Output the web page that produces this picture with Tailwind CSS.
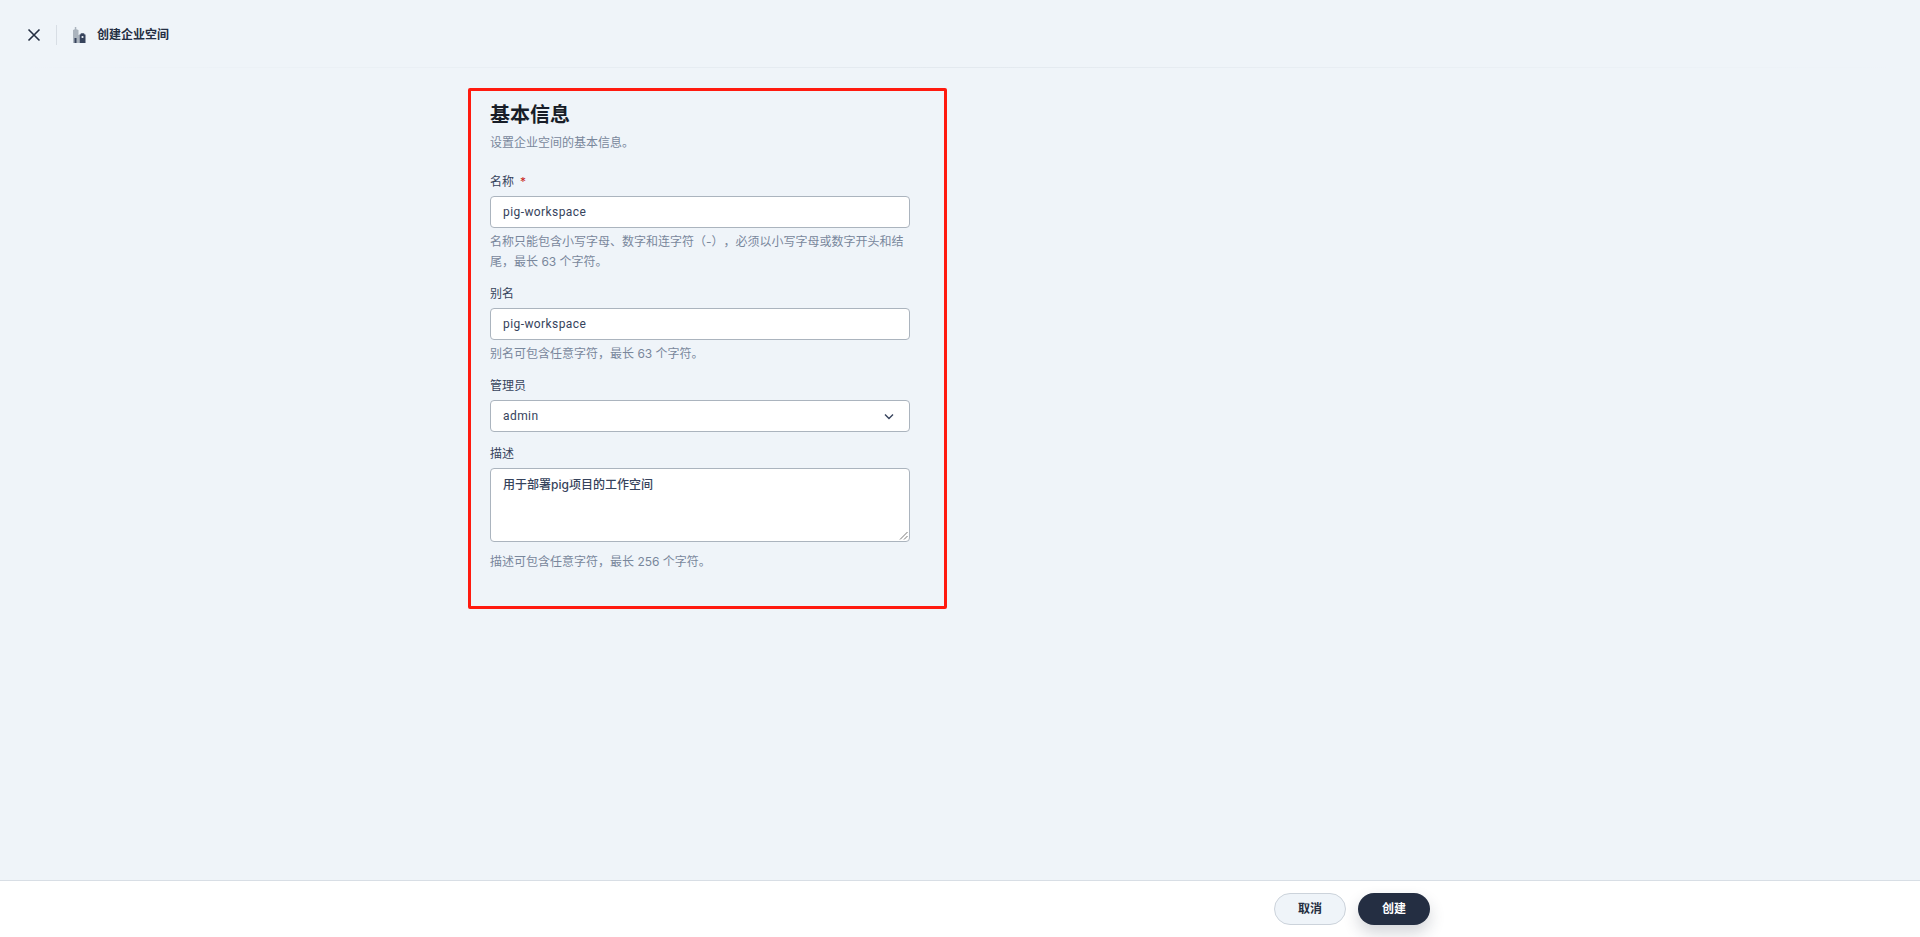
<!doctype html>
<html><head><meta charset="utf-8"><script src="https://cdn.jsdelivr.net/npm/@tailwindcss/browser@4"></script></head>
<body class="m-0 h-[937px] overflow-hidden bg-[#eff4f9] font-['Inter','Noto_Sans_CJK_SC',sans-serif] text-[12px] text-[#36435c] antialiased [text-spacing-trim:space-all]">
<div class="flex h-[937px] flex-col">
<header class="flex h-[67px] shrink-0 items-center pl-6">
<button class="mt-[2px] flex h-5 w-5 items-center justify-center text-[#242e42]"><svg width="16" height="16" viewBox="0 0 16 16" fill="none" stroke="currentColor" stroke-width="1.6"><path d="M2.500 2.500l11 11M13.500 2.500l-11 11"/></svg></button>
<div class="ml-3 mt-[2px] h-5 w-px bg-[#d8dee5]"></div>
<svg class="ml-[15px] mt-[3px]" width="15" height="18" viewBox="0 0 15 18"><path d="M1 17V4l1.800-.8V1h1.500v2.200L6.500 4v5H7v8z" fill="#abb4be"/><path d="M2.500 12h2v5h-2z" fill="#36435c"/><path d="M7.500 17V8.500h1V8.200a1 1 0 0 1 1-1h2a1 1 0 0 1 1 1v.3h1V17z" fill="#36435c"/><circle cx="10.500" cy="11" r="1.100" fill="#eff4f9"/></svg>
<span class="ml-[10px] mt-[3px] font-semibold text-[#242e42]">创建企业空间</span>
</header>
<div class="h-px shrink-0 bg-linear-to-r from-transparent via-[#e3e9ef] to-transparent"></div>
<main class="flex-1">
<div class="ml-[468px] mt-5 h-[521px] w-[479px] rounded-[2px] border-[3px] border-[#ff1a0f] pl-[19px] pt-[10px]">
<h2 class="text-[20px] leading-[28px] font-bold text-[#181d28]">基本信息</h2>
<p class="mt-[4px] leading-5 text-[#79879c]">设置企业空间的基本信息。</p>
<div class="mt-[19px] w-[420px]">
<label class="block leading-5">名称<span class="ml-[6px] text-[#ca2621]">*</span></label>
<div class="mt-[4px] flex h-8 items-center rounded-[4px] border border-[#abb4be] bg-white px-3 font-['Roboto'] tracking-[0.42px]">pig-workspace</div>
<p class="mt-[4px] w-[420px] leading-5 text-[#79879c]">名称只能包含小写字母、数字和连字符（-），必须以小写字母或数字开头和结尾，最长 63 个字符。</p>
<label class="mt-[12px] block leading-5">别名</label>
<div class="mt-[4px] flex h-8 items-center rounded-[4px] border border-[#abb4be] bg-white px-3 font-['Roboto'] tracking-[0.42px]">pig-workspace</div>
<p class="mt-[4px] leading-5 text-[#79879c]">别名可包含任意字符，最长 63 个字符。</p>
<label class="mt-[12px] block leading-5">管理员</label>
<div class="mt-[4px] flex h-8 items-center justify-between rounded-[4px] border border-[#abb4be] bg-white pl-3 pr-[12px] font-['Roboto'] tracking-[0.42px]">admin<svg width="16" height="16" viewBox="0 0 16 16" fill="none" stroke="#36435c" stroke-width="1.4"><path d="M4 6.500l4 4 4-4"/></svg></div>
<label class="mt-[12px] block leading-5">描述</label>
<div class="relative mt-[4px] h-[74px] rounded-[4px] border border-[#abb4be] bg-white px-3 py-[6px] font-medium leading-5">用于部署pig项目的工作空间<svg class="absolute bottom-[1px] right-[1px]" width="9" height="9" viewBox="0 0 9 9" stroke="#555" stroke-width="0.8"><path d="M1 8.500L8.500 1M5 8.500L8.500 5"/></svg></div>
<p class="mt-[10px] leading-5 text-[#79879c]">描述可包含任意字符，最长 256 个字符。</p>
</div>
</div>
</main>
<footer class="flex h-[57px] shrink-0 items-start justify-end gap-3 border-t border-[#d8dee5] bg-white pr-[490px] pt-3">
<button class="h-8 w-[72px] rounded-full border border-[#ccd3db] bg-[#eff4f9] font-semibold text-[#242e42]">取消</button>
<button class="h-8 w-[72px] rounded-full bg-[#242e42] font-semibold text-white shadow-[0_8px_16px_0_rgba(36,46,66,0.2)]">创建</button>
</footer>
</div>
</body></html>
